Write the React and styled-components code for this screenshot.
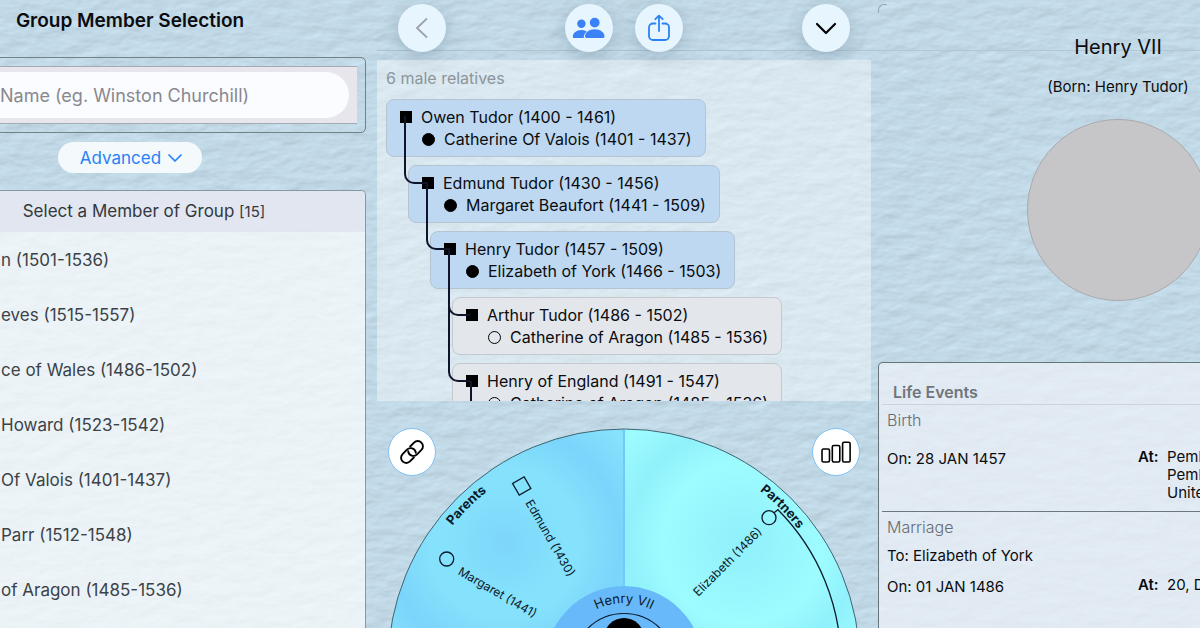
import React from 'react';
import styled, { createGlobalStyle } from 'styled-components';

const GlobalStyle = createGlobalStyle`
  * {
    box-sizing: border-box;
  }

  body {
    margin: 0;
    background: #c0d7e5;
    color: #0a0c10;
    font-family: Inter, "Liberation Sans", sans-serif;
    font-size: 15px;
  }

  button, input {
    font-family: inherit;
  }
`;

const members = [
  'n (1501-1536)',
  'eves (1515-1557)',
  'ce of Wales (1486-1502)',
  'Howard (1523-1542)',
  'Of Valois (1401-1437)',
  'Parr (1512-1548)',
  'of Aragon (1485-1536)'
];

// rows is how many cards up the parent sits
const relatives = [
  { depth: 0, rows: 0, direct: true, name: 'Owen Tudor (1400 - 1461)', spouse: 'Catherine Of Valois (1401 - 1437)' },
  { depth: 1, rows: 1, direct: true, name: 'Edmund Tudor (1430 - 1456)', spouse: 'Margaret Beaufort (1441 - 1509)' },
  { depth: 2, rows: 1, direct: true, name: 'Henry Tudor (1457 - 1509)', spouse: 'Elizabeth of York (1466 - 1503)' },
  { depth: 3, rows: 1, direct: false, name: 'Arthur Tudor (1486 - 1502)', spouse: 'Catherine of Aragon (1485 - 1536)' },
  { depth: 3, rows: 2, direct: false, name: 'Henry of England (1491 - 1547)', spouse: 'Catherine of Aragon (1485 - 1536)', open: true }
];

function App() {
  return (
    <Screen>
      <GlobalStyle />
      <Paper />
      <Board>
        <GroupPane />
        <TreePane />
        <PersonPane />
      </Board>
    </Screen>
  );
}

function Paper() {
  return (
    <PaperSvg aria-hidden="true">
      <filter id="paper" x="0" y="0" width="100%" height="100%" colorInterpolationFilters="sRGB">
        <feTurbulence type="fractalNoise" baseFrequency="0.04 0.08" numOctaves="3" seed="8" />
        <feDiffuseLighting lightingColor="#c1d8e6" surfaceScale="0.5" diffuseConstant="1.155">
          <feDistantLight azimuth="240" elevation="60" />
        </feDiffuseLighting>
      </filter>
      <rect width="100%" height="100%" filter="url(#paper)" />
    </PaperSvg>
  );
}

function GroupPane() {
  return (
    <GroupColumn>
      <GroupTitle>Group Member Selection</GroupTitle>
      <SearchFrame>
        <SearchBar>
          <SearchInput type="search" aria-label="Name" placeholder="Name (eg. Winston Churchill)" />
        </SearchBar>
      </SearchFrame>
      <AdvancedButton type="button">
        Advanced
        <svg width="14" height="8" viewBox="0 0 14 8" fill="none" stroke="currentColor" strokeWidth="1.7" strokeLinecap="round" strokeLinejoin="round">
          <path d="M1 1l6 6 6-6" />
        </svg>
      </AdvancedButton>
      <MemberPanel>
        <MemberHeading>
          Select a Member of Group <Count>[15]</Count>
        </MemberHeading>
        <MemberList>
          {members.map((member) => (
            <li key={member}>
              <MemberButton type="button">{member}</MemberButton>
            </li>
          ))}
        </MemberList>
      </MemberPanel>
    </GroupColumn>
  );
}

function TreePane() {
  return (
    <Column>
      <Toolbar>
        <RoundButton type="button" aria-label="Back" disabled>
          <svg width="12" height="20" viewBox="0 0 12 20" fill="none" stroke="#9ca4aa" strokeWidth="1.8" strokeLinecap="round" strokeLinejoin="round">
            <path d="M10.500 1L1 10l9.500 9" />
          </svg>
        </RoundButton>
        <ToolGroup>
          <RoundButton type="button" aria-label="People">
            <PeopleIcon />
          </RoundButton>
          <RoundButton type="button" aria-label="Share">
            <ShareIcon />
          </RoundButton>
        </ToolGroup>
        <RoundButton type="button" aria-label="More">
          <svg width="22" height="13" viewBox="0 0 22 13" fill="none" stroke="#000" strokeWidth="2.2" strokeLinecap="round" strokeLinejoin="round">
            <path d="M2 2l9 9 9-9" />
          </svg>
        </RoundButton>
      </Toolbar>
      <TreePanel>
        <TreeCaption>6 male relatives</TreeCaption>
        <TreeList>
          {relatives.map((relative) => (
            <TreeCard
              key={relative.name}
              $depth={relative.depth}
              $rows={relative.rows}
              $direct={relative.direct}
              $open={relative.open}
            >
              <TreeLine>
                <SquareMark />
                {relative.name}
              </TreeLine>
              <TreeLine $spouse>
                <RoundMark $filled={relative.direct} />
                {relative.spouse}
              </TreeLine>
            </TreeCard>
          ))}
        </TreeList>
      </TreePanel>
      <ChartArea>
        <FamilyWheel />
        <ChartActions>
          <RoundButton type="button" aria-label="Link" $outlined>
            <LinkIcon />
          </RoundButton>
          <RoundButton type="button" aria-label="Statistics" $outlined>
            <svg width="32" height="24" viewBox="0 0 32 24" fill="none" stroke="#000" strokeWidth="1.6">
              <rect x="2" y="9" width="7.500" height="13" rx="1.500" />
              <rect x="12.300" y="5.500" width="7.500" height="16.500" rx="1.500" />
              <rect x="22.600" y="2.200" width="7.500" height="19.800" rx="1.500" />
            </svg>
          </RoundButton>
        </ChartActions>
      </ChartArea>
    </Column>
  );
}

function PeopleIcon() {
  return (
    <svg width="34" height="22" viewBox="0 0 34 22" fill="#3b82f7">
      <circle cx="9.400" cy="6.700" r="4.200" />
      <path d="M.8 19.500c0-3.600 3.600-6.600 8.600-6.600 2.200 0 4 .6 5.400 1.500-2 1.600-3 3.700-3 5.600 0 .4 0 .7.200 1H2c-.8 0-1.200-.5-1.200-1.500z" />
      <circle cx="22.700" cy="5.600" r="4.900" />
      <path d="M13 19.300c0-3.400 3.800-7 9.700-7s9.800 3.600 9.800 7c0 1.200-.5 1.700-1.500 1.700H14.500c-1 0-1.500-.5-1.500-1.700z" />
    </svg>
  );
}

function ShareIcon() {
  return (
    <svg width="24" height="28" viewBox="0 0 24 28" fill="none" stroke="#2b82f6" strokeWidth="1.800" strokeLinecap="round" strokeLinejoin="round">
      <path d="M8.500 9.500H6A4 4 0 0 0 2 13.500V22a4 4 0 0 0 4 4h12a4 4 0 0 0 4-4v-8.500a4 4 0 0 0-4-4h-2.500" />
      <path d="M12 17V2M8.300 5.200L12 1.600l3.700 3.600" />
    </svg>
  );
}

function LinkIcon() {
  return (
    <svg width="28" height="28" viewBox="-14 -14 28 28" fill="none" stroke="#000" strokeWidth="1.900" strokeLinecap="round">
      <path transform="rotate(-45)" d="M2.200 3.200A5.200 5.200 0 0 0-1.900-5.200H-8.100a5.200 5.200 0 0 0 0 10.400h5.500" />
      <path transform="rotate(135)" d="M2.200 3.200A5.200 5.200 0 0 0-1.900-5.200H-8.100a5.200 5.200 0 0 0 0 10.400h5.500" />
    </svg>
  );
}

// All wheel coordinates are relative to a 494 x 227 window onto its upper part.
function FamilyWheel() {
  return (
    <WheelSvg viewBox="0 0 494 227" preserveAspectRatio="xMidYMin slice" role="img" aria-label="Henry VII family wheel">
      <defs>
        <radialGradient id="parentsFill" gradientUnits="userSpaceOnUse" cx="128" cy="142" r="200">
          <stop offset="0" stopColor="#7dd6fb" />
          <stop offset=".3" stopColor="#85e2fc" />
          <stop offset=".38" stopColor="#85e1fc" />
          <stop offset=".58" stopColor="#7bd4fb" />
          <stop offset=".78" stopColor="#86e2fd" />
          <stop offset="1" stopColor="#79d2fb" />
        </radialGradient>
        <radialGradient id="partnersFill" gradientUnits="userSpaceOnUse" cx="366" cy="142" r="200">
          <stop offset="0" stopColor="#8fefFC" />
          <stop offset=".4" stopColor="#9dfcfe" />
          <stop offset=".58" stopColor="#90f1fc" />
          <stop offset=".78" stopColor="#9dfcfe" />
          <stop offset="1" stopColor="#90f1fd" />
        </radialGradient>
        <path id="rimArc" d="M26 264a221 221 0 0 1 442 0" />
        <path id="hubArc" d="M185 264a62 62 0 0 1 124 0" />
      </defs>
      <path d="M247 264H11A236 236 0 0 1 247 28z" fill="url(#parentsFill)" />
      <path d="M247 264V28a236 236 0 0 1 236 236z" fill="url(#partnersFill)" />
      <circle cx="247" cy="264" r="236" fill="none" stroke="#3f6570" />
      <path d="M247 29v160" stroke="#72c8fb" strokeWidth="2" />
      <circle cx="247" cy="264" r="79" fill="#68b9fa" />
      <circle cx="247" cy="264" r="51.500" fill="none" stroke="#0a1a2c" strokeWidth="1.200" />
      <circle cx="247" cy="237" r="20" />
      <WheelText $bold textAnchor="middle">
        <textPath href="#rimArc" startOffset="25.200%">Parents</textPath>
      </WheelText>
      <WheelText $bold textAnchor="middle">
        <textPath href="#rimArc" startOffset="75%">Partners</textPath>
      </WheelText>
      <WheelText $large textAnchor="middle">
        <textPath href="#hubArc" startOffset="50%">Henry VII</textPath>
      </WheelText>
      <g fill="none" stroke="#0b1a2a" strokeWidth="1.300">
        <rect x="-6.700" y="-6.700" width="13.400" height="13.400" transform="translate(144.700 85) rotate(-30)" />
        <circle cx="69.700" cy="158" r="7" />
        <circle cx="392" cy="116.700" r="7" />
        <path d="M397 111.700l4-3a217 217 0 0 1 63 155" />
      </g>
      <g transform="translate(247 264)">
        <WheelText x="-190" y="4.500" transform="rotate(60)">Edmund (1430)</WheelText>
        <WheelText x="-190" y="4.500" transform="rotate(30)">Margaret (1441)</WheelText>
        <WheelText x="192" y="4.500" textAnchor="end" transform="rotate(-45)">Elizabeth (1486)</WheelText>
      </g>
    </WheelSvg>
  );
}

function PersonPane() {
  return (
    <PersonColumn>
      <PersonName>Henry VII</PersonName>
      <BirthName>(Born: Henry Tudor)</BirthName>
      <Portrait />
      <EventsPanel>
        <EventsHeading>Life Events</EventsHeading>
        <Event>
          <EventKind>Birth</EventKind>
          <EventBody>
            <EventDate>On: 28 JAN 1457</EventDate>
            <EventAt>At:</EventAt>
            <EventPlace>
              Pembroke,<br />
              Pembrokeshire,<br />
              United Kingdom
            </EventPlace>
          </EventBody>
        </Event>
        <Event>
          <EventKind>Marriage</EventKind>
          <EventWith>To: Elizabeth of York</EventWith>
          <EventBody>
            <EventDate>On: 01 JAN 1486</EventDate>
            <EventAt>At:</EventAt>
            <EventPlace>20, D</EventPlace>
          </EventBody>
        </Event>
      </EventsPanel>
    </PersonColumn>
  );
}

const Screen = styled.div`
  position: relative;
  height: 100vh;
  overflow: hidden;
`;

const PaperSvg = styled.svg`
  position: absolute;
  inset: 0;
  width: 100%;
  height: 100%;
`;

/* three equal columns, the outer two run past the window edges */
const Board = styled.main`
  position: relative;
  display: grid;
  grid-template-columns: repeat(3, minmax(0, 1fr));
  width: 123.5%;
  height: 100%;
  margin-left: -9.75%;
`;

const Column = styled.section`
  display: flex;
  flex-direction: column;
  min-height: 0;
`;

const GroupColumn = styled(Column)`
  align-items: center;
  padding: 0 11px;
`;

const GroupTitle = styled.h1`
  margin: 9px 0 24px;
  font-size: 19px;
  font-weight: 600;
  line-height: 24px;
`;

const SearchFrame = styled.div`
  width: 100%;
  padding: 8px;
  border: 1px solid #718288;
  border-radius: 5px;
`;

const SearchBar = styled.div`
  padding: 5px 8px;
  border: solid #a3acb2;
  border-width: 1px 0;
  background: #e6e6ec;
`;

const SearchInput = styled.input`
  display: block;
  width: 100%;
  height: 46px;
  padding: 0 16px 0 89px;
  border: 0;
  border-radius: 23px;
  background: #fbfcff;
  font-size: 18px;
  appearance: none;

  &::placeholder {
    color: #88898e;
    opacity: 1;
  }
`;

const AdvancedButton = styled.button`
  display: flex;
  align-items: center;
  gap: 7px;
  height: 31px;
  margin: 9px 0 17px;
  padding: 0 20px 0 22px;
  border: 0;
  border-radius: 16px;
  background: #f4f9fb;
  color: #2681f7;
  font-size: 17px;
`;

const MemberPanel = styled.div`
  flex: 1;
  width: 100%;
  min-height: 0;
  overflow: hidden;
  border: 1px solid #8598a4;
  border-bottom: 0;
  border-radius: 5px 5px 0 0;
  background: rgba(255, 255, 255, 0.68);
`;

const MemberHeading = styled.h2`
  margin: 0;
  padding: 0 0 0 28px;
  background: rgba(222, 226, 238, 0.75);
  color: #33383e;
  font-size: 17px;
  font-weight: 400;
  line-height: 41px;
  text-align: center;
`;

const Count = styled.span`
  font-size: 15px;
`;

const MemberList = styled.ul`
  margin: 0;
  padding: 0;
  list-style: none;
`;

const MemberButton = styled.button`
  width: 100%;
  height: 55px;
  padding: 0 0 0 106px;
  border: 0;
  background: none;
  color: #3c4247;
  font-size: 17px;
  text-align: left;
`;

const Toolbar = styled.header`
  position: relative;
  z-index: 1;
  display: flex;
  justify-content: space-between;
  height: 51px;
  margin-bottom: 9px;
  padding: 4px 21px 0;
  border-bottom: 1px solid #adc4d1;
`;

const ToolGroup = styled.div`
  display: flex;
  gap: 22px;
`;

const RoundButton = styled.button`
  display: grid;
  place-items: center;
  width: 48px;
  height: 48px;
  padding: 0;
  border: ${({ $outlined }) => ($outlined ? '1px solid #7fc2f5' : '0')};
  border-radius: 50%;
  background: ${({ $outlined }) => ($outlined ? '#fff' : '#e7f5fe')};
  box-shadow: ${({ $outlined }) => ($outlined ? 'none' : '0 5px 18px rgba(70, 100, 120, 0.3)')};
`;

const TreePanel = styled.div`
  height: 341px;
  padding: 6px 9px 0;
  overflow: hidden;
  background: rgba(255, 255, 255, 0.4);
`;

const TreeCaption = styled.h2`
  margin: 0 0 9px;
  color: #8b959c;
  font-size: 16px;
  font-weight: 400;
  line-height: 24px;
`;

const TreeList = styled.ul`
  display: flex;
  flex-direction: column;
  align-items: flex-start;
  gap: 8px;
  margin: 0;
  padding: 0;
  list-style: none;
`;

const TreeCard = styled.li`
  position: relative;
  margin-left: ${({ $depth }) => $depth * 22}px;
  padding: 6px 13px;
  border: 1px solid ${({ $direct }) => ($direct ? '#b3c4d3' : '#c5c9ce')};
  border-radius: 8px;
  background: ${({ $direct }) => ($direct ? '#bdd8f0' : '#e3e6eb')};

  /* elbow from the parent's square */
  &::before {
    content: '';
    position: absolute;
    z-index: 1;
    left: -5px;
    bottom: 38px;
    display: ${({ $rows }) => ($rows ? 'block' : 'none')};
    width: 20px;
    height: ${({ $rows }) => $rows * 66}px;
    border: solid #10142a;
    border-width: 0 0 2px 2px;
    border-bottom-left-radius: 10px;
  }

  &::after {
    content: '';
    position: absolute;
    top: 17px;
    left: 17px;
    display: ${({ $open }) => ($open ? 'block' : 'none')};
    width: 2px;
    height: 50px;
    background: #10142a;
  }
`;

const TreeLine = styled.div`
  display: flex;
  align-items: center;
  gap: 9px;
  padding-left: ${({ $spouse }) => ($spouse ? 22 : 0)}px;
  font-size: 16px;
  line-height: 22px;
  white-space: nowrap;
`;

const SquareMark = styled.span`
  width: 12px;
  height: 12px;
  background: #000;
`;

const RoundMark = styled.span`
  width: 13px;
  height: 13px;
  border: 1px solid #000;
  border-radius: 50%;
  background: ${({ $filled }) => ($filled ? '#000' : 'none')};
`;

const ChartArea = styled.div`
  position: relative;
  flex: 1;
  min-height: 0;
`;

const WheelSvg = styled.svg`
  display: block;
  width: 100%;
  height: 100%;
`;

const WheelText = styled.text`
  fill: #0b1a2a;
  font-size: ${({ $bold, $large }) => ($bold || $large ? 13 : 12)}px;
  font-weight: ${({ $bold }) => ($bold ? 700 : 400)};
`;

const ChartActions = styled.div`
  position: absolute;
  inset: 27px 11px auto;
  display: flex;
  justify-content: space-between;
`;

const PersonColumn = styled(Column)`
  position: relative;
  align-items: center;
  padding: 0 7px;

  &::before {
    content: '';
    position: absolute;
    inset: 50px 0 auto;
    border-top: 1px solid #b0c8d6;
  }

  &::after {
    content: '';
    position: absolute;
    top: 4px;
    left: 7px;
    width: 8px;
    height: 8px;
    border: solid #93a8b4;
    border-width: 1px 0 0 1px;
    border-top-left-radius: 6px;
  }
`;

const PersonName = styled.h2`
  position: relative;
  margin: 35px 0 18px;
  font-size: 20px;
  font-weight: 400;
  line-height: 24px;
`;

const BirthName = styled.p`
  margin: 0 0 22px;
  font-size: 15px;
  line-height: 20px;
`;

const Portrait = styled.div`
  flex: none;
  width: 182px;
  height: 182px;
  border: 1px solid #a9a9ac;
  border-radius: 50%;
  background: #c6c6c9;
`;

const EventsPanel = styled.div`
  flex: 1;
  width: 100%;
  min-height: 0;
  margin-top: 61px;
  padding: 0 3px;
  overflow: hidden;
  border: 1px solid #66747c;
  border-bottom: 0;
  border-radius: 5px 5px 0 0;
  background: rgba(240, 242, 248, 0.7);
`;

const EventsHeading = styled.h3`
  margin: 0;
  padding: 18px 11px 0;
  color: #70757b;
  font-size: 16px;
  font-weight: 600;
  line-height: 23px;
`;

const Event = styled.article`
  padding: 5px 5px 9px;
  border-top: 1px solid #cbd2da;

  & + & {
    border-top-color: #6d777e;
  }
`;

const EventKind = styled.h4`
  margin: 0;
  color: #666c72;
  font-size: 16px;
  font-weight: 300;
  line-height: 20px;
`;

const EventWith = styled.p`
  margin: 10px 0 0;
  font-size: 15px;
  line-height: 18px;
`;

const EventBody = styled.div`
  display: grid;
  grid-template-columns: 251px 29px 1fr;
  padding-top: 18px;
  font-size: 15px;
  line-height: 18px;

  ${EventWith} + & {
    padding-top: 11px;
  }
`;

const EventDate = styled.span`
  padding-top: 2px;
`;

const EventAt = styled.span`
  font-weight: 600;
`;

const EventPlace = styled.span`
  white-space: nowrap;
`;

export default App;
